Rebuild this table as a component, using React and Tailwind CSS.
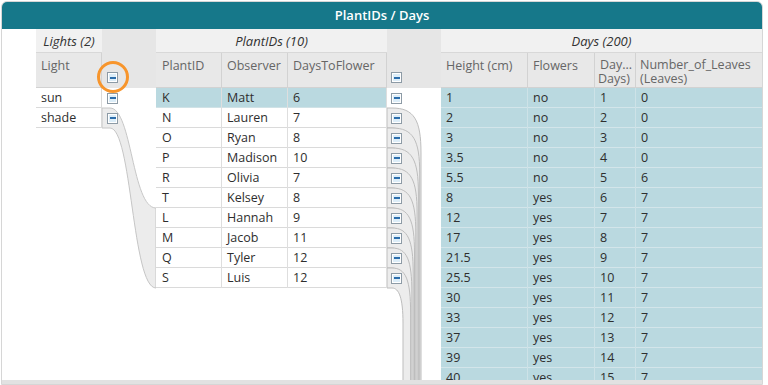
import React from "react";

const plants = [
  ["K", "Matt", "6"],
  ["N", "Lauren", "7"],
  ["O", "Ryan", "8"],
  ["P", "Madison", "10"],
  ["R", "Olivia", "7"],
  ["T", "Kelsey", "8"],
  ["L", "Hannah", "9"],
  ["M", "Jacob", "11"],
  ["Q", "Tyler", "12"],
  ["S", "Luis", "12"],
];

const days = [
  ["1", "no", "1", "0"],
  ["2", "no", "2", "0"],
  ["3", "no", "3", "0"],
  ["3.5", "no", "4", "0"],
  ["5.5", "no", "5", "6"],
  ["8", "yes", "6", "7"],
  ["12", "yes", "7", "7"],
  ["17", "yes", "8", "7"],
  ["21.5", "yes", "9", "7"],
  ["25.5", "yes", "10", "7"],
  ["30", "yes", "11", "7"],
  ["33", "yes", "12", "7"],
  ["37", "yes", "13", "7"],
  ["39", "yes", "14", "7"],
  ["40", "yes", "15", "7"],
];

function Btn() {
  return (
    <span className="relative z-10 flex h-[11px] w-[11px] items-center justify-center border border-[#8d9ba6] bg-[#dcedf8] shadow-[inset_0_0_0_1px_#ffffff]">
      <span className="h-[2px] w-[6px] bg-[#2c6dab]" />
    </span>
  );
}

const bands = [1, 2, 3, 4, 5, 6, 7, 8, 9].map((i) => {
  const top = 20 * i;
  const bot = top + 20;
  const r = 34 - (i - 1) * 1.3;
  const l = 16 + (9 - i) * 0.6;
  return `M0,${top} L5,${top} C${r * 0.8},${top} ${r},${top + 12} ${r},${top + 45} L${r},320 L${l},320 L${l},${bot + 35} C${l},${bot + 10} ${l - 4},${bot} 5,${bot} L0,${bot} Z`;
});

export default function App() {
  return (
    <div className="h-[385px] w-[768px] overflow-hidden bg-white font-['Open_Sans',sans-serif] text-[12.5px] text-[#2e2e2e]">
      <div className="ml-px mt-px flex h-[384px] w-[762px] flex-col overflow-hidden rounded-t-[6px] border border-[#d6d6d6]">
        <div className="flex h-[27px] shrink-0 items-center justify-center bg-[#16788a] text-[13px] font-semibold text-white">
          PlantIDs / Days
        </div>
        <div className="flex min-h-0 flex-1 overflow-hidden">
          {/* spacer */}
          <div className="w-[34px] shrink-0" />

          {/* Lights table */}
          <div className="w-[66px] shrink-0">
            <div className="flex h-[24px] items-center justify-center border-b border-[#d8d8d8] bg-[#f1f1f1] pt-[2px] text-[13px] italic text-[#333]">
              Lights (2)
            </div>
            <div className="h-[35px] border-b border-r border-[#d2d2d2] bg-[#e8e8e8] pl-[5px] pt-[4px] text-[#666]">
              Light
            </div>
            {["sun", "shade"].map((l) => (
              <div key={l} className="flex h-[20px] items-center border-b border-r border-[#dadada] pl-[5px] pt-px">
                {l}
              </div>
            ))}
          </div>

          {/* left collapse column */}
          <div className="relative w-[54px] shrink-0">
            <div className="flex h-[59px] items-end bg-[#e6e6e6] pb-[5px] pl-[5px]">
              <span className="relative">
                <Btn />
                <span className="absolute -left-[10px] -top-[11px] h-[32px] w-[32px] rounded-full border-[3px] border-[#f7952c]" />
              </span>
            </div>
            <svg className="absolute left-0 top-[59px]" width="54" height="300" viewBox="0 0 54 300">
              <path
                d="M0,20 L8,20 C30,20 30,120 54,120 L54,200 C30,200 30,40 8,40 L0,40 Z"
                fill="#ececec"
                stroke="#c6c6c6"
                strokeWidth="1"
              />
            </svg>
            {["sun", "shade"].map((l) => (
              <div key={l} className="flex h-[20px] items-center pl-[5px]">
                <Btn />
              </div>
            ))}
          </div>

          {/* PlantIDs table */}
          <div className="w-[231px] shrink-0">
            <div className="flex h-[24px] items-center justify-center border-b border-[#d8d8d8] bg-[#f1f1f1] pt-[2px] text-[13px] italic text-[#333]">
              PlantIDs (10)
            </div>
            <div className="grid h-[35px] grid-cols-[66px_66px_99px] border-b border-[#d2d2d2] bg-[#e8e8e8] text-[#666]">
              <div className="border-r border-[#d2d2d2] pl-[6px] pt-[4px]">PlantID</div>
              <div className="border-r border-[#d2d2d2] pl-[5px] pt-[4px]">Observer</div>
              <div className="border-r border-[#d2d2d2] pl-[5px] pt-[4px]">DaysToFlower</div>
            </div>
            {plants.map((p, i) => (
              <div
                key={p[0]}
                className={
                  i === 0
                    ? "grid h-[20px] grid-cols-[66px_66px_99px] border-b border-[#d0e2e6] bg-[#bad9e0]"
                    : "grid h-[20px] grid-cols-[66px_66px_99px] border-b border-[#dadada] bg-white"
                }
              >
                <div className="flex items-center border-r border-[#dedede] pl-[6px] pt-px">{p[0]}</div>
                <div className="flex items-center border-r border-[#dedede] pl-[5px] pt-px">{p[1]}</div>
                <div className="flex items-center border-r border-[#dedede] pl-[5px] pt-px">{p[2]}</div>
              </div>
            ))}
          </div>

          {/* middle collapse column */}
          <div className="relative w-[54px] shrink-0">
            <div className="flex h-[59px] items-end bg-[#e6e6e6] pb-[5px] pl-[4px]">
              <Btn />
            </div>
            <svg className="absolute left-0 top-[59px]" width="54" height="320" viewBox="0 0 54 320">
              {bands.map((d, i) => (
                <path key={i} d={d} fill="#ececec" stroke="#bdbdbd" strokeWidth="1" />
              ))}
            </svg>
            {plants.map((p) => (
              <div key={p[0]} className="flex h-[20px] items-center pl-[4px]">
                <Btn />
              </div>
            ))}
          </div>

          {/* Days table */}
          <div className="w-[321px] shrink-0">
            <div className="flex h-[24px] items-center justify-center border-b border-[#d8d8d8] bg-[#f1f1f1] pt-[2px] text-[13px] italic text-[#333]">
              Days (200)
            </div>
            <div className="grid h-[35px] grid-cols-[87px_67px_41px_126px] border-b border-[#d2d2d2] bg-[#e8e8e8] leading-[14px] text-[#666]">
              <div className="border-r border-[#d2d2d2] pl-[5px] pt-[6px]">Height (cm)</div>
              <div className="border-r border-[#d2d2d2] pl-[5px] pt-[6px]">Flowers</div>
              <div className="overflow-hidden border-r border-[#d2d2d2] pl-[3px] pt-[5px]">
                <div className="pl-[2px]">Day...</div>
                <div>Days)</div>
              </div>
              <div className="overflow-hidden pl-[4px] pt-[5px]">
                <div>Number_of_Leaves</div>
                <div>(Leaves)</div>
              </div>
            </div>
            {days.map((r, i) => (
              <div
                key={i}
                className="grid h-[20px] grid-cols-[87px_67px_41px_126px] border-b border-[#d3e5ea] bg-[#bad9e0]"
              >
                <div className="flex items-center border-r border-[#cde2e7] pl-[5px] pt-px">{r[0]}</div>
                <div className="flex items-center border-r border-[#cde2e7] pl-[5px] pt-px">{r[1]}</div>
                <div className="flex items-center border-r border-[#cde2e7] pl-[5px] pt-px">{r[2]}</div>
                <div className="flex items-center pl-[5px] pt-px">{r[3]}</div>
              </div>
            ))}
          </div>
        </div>
        <div className="h-[4px] shrink-0 bg-[#e2e2e2]" />
      </div>
    </div>
  );
}
